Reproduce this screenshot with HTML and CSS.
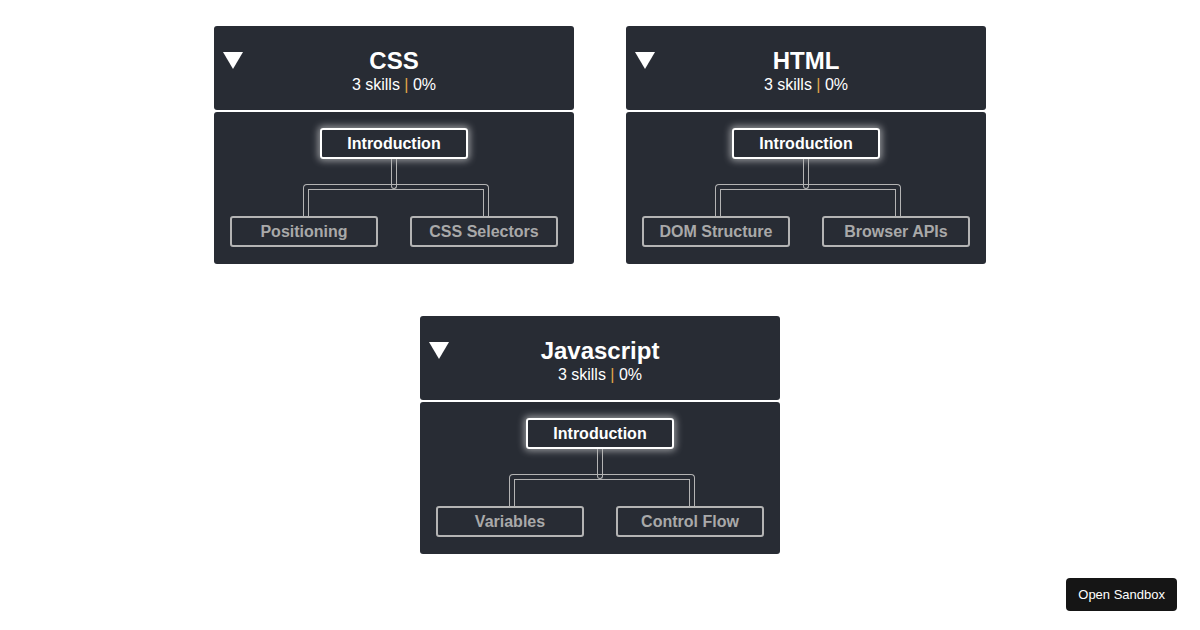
FILE: index.html
```html
<!DOCTYPE html>
<html lang="en">
<head>
  <meta charset="UTF-8">
  <meta name="viewport" content="width=device-width, initial-scale=1.0">
  <title>Skill Trees</title>
  <link rel="stylesheet" href="styles.css">
</head>
<body>
  <div class="trees">

    <div class="tree-card">
      <div class="tree-header">
        <span class="toggle"></span>
        <div class="tree-title">
          <h2>CSS</h2>
          <div class="tree-meta">3 skills <span class="sep">|</span> 0%</div>
        </div>
      </div>
      <div class="tree-body">
        <div class="node root">Introduction</div>
        <div class="stem"></div>
        <div class="branch"><div class="branch-inner"></div></div>
        <div class="children">
          <div class="node">Positioning</div>
          <div class="node">CSS Selectors</div>
        </div>
      </div>
    </div>

    <div class="tree-card">
      <div class="tree-header">
        <span class="toggle"></span>
        <div class="tree-title">
          <h2>HTML</h2>
          <div class="tree-meta">3 skills <span class="sep">|</span> 0%</div>
        </div>
      </div>
      <div class="tree-body">
        <div class="node root">Introduction</div>
        <div class="stem"></div>
        <div class="branch"><div class="branch-inner"></div></div>
        <div class="children">
          <div class="node">DOM Structure</div>
          <div class="node">Browser APIs</div>
        </div>
      </div>
    </div>

    <div class="tree-card">
      <div class="tree-header">
        <span class="toggle"></span>
        <div class="tree-title">
          <h2>Javascript</h2>
          <div class="tree-meta">3 skills <span class="sep">|</span> 0%</div>
        </div>
      </div>
      <div class="tree-body">
        <div class="node root">Introduction</div>
        <div class="stem"></div>
        <div class="branch"><div class="branch-inner"></div></div>
        <div class="children">
          <div class="node">Variables</div>
          <div class="node">Control Flow</div>
        </div>
      </div>
    </div>

  </div>

  <button class="sandbox-btn">Open Sandbox</button>
</body>
</html>
```

FILE: styles.css
```css
body {
  font-family: "Liberation Sans", Arial, sans-serif;
  margin: 0;
  padding: 0;
  background: #fff;
}
.trees {
  display: flex;
  flex-wrap: wrap;
  justify-content: center;
  column-gap: 52px;
  row-gap: 52px;
  width: 772px;
  margin: 26px auto 0;
}
.tree-card {
  width: 360px;
  display: flex;
  flex-direction: column;
  gap: 2px;
}
.tree-header {
  background: #282c34;
  border-radius: 3px;
  height: 84px;
  box-sizing: border-box;
  padding-top: 21px;
  display: grid;
  grid-template-columns: 1fr auto 1fr;
  align-items: start;
  color: #fff;
}
.toggle {
  justify-self: start;
  margin: 5px 0 0 9px;
  width: 0;
  height: 0;
  border-left: 10px solid transparent;
  border-right: 10px solid transparent;
  border-top: 17px solid #fff;
}
.tree-title {
  text-align: center;
}
.tree-title h2 {
  margin: 0;
  font-size: 24px;
  line-height: 28px;
  font-weight: bold;
}
.tree-meta {
  font-size: 16px;
  line-height: 20px;
}
.tree-meta .sep {
  color: #e0a848;
}
.tree-body {
  background: #282c34;
  border-radius: 3px;
  padding: 16px 16px 17px;
  display: flex;
  flex-direction: column;
  align-items: center;
}
.node {
  width: 148px;
  height: 31px;
  box-sizing: border-box;
  border: 2px solid #b4b4b4;
  border-radius: 3px;
  color: #a9a9a9;
  font-size: 16px;
  font-weight: bold;
  display: flex;
  align-items: center;
  justify-content: center;
}
.node.root {
  border-color: #fff;
  color: #fff;
  box-shadow: 0 0 7px 2px rgba(255, 255, 255, 0.5);
}
.stem {
  width: 4px;
  height: 29px;
  border: 1px solid #b4b4b4;
  border-top: none;
  border-radius: 0 0 3px 3px;
  margin-left: -1px;
  position: relative;
  z-index: 1;
}
.branch {
  width: 184px;
  height: 31px;
  margin-top: -5px;
  margin-left: 3px;
  border: 1px solid #b4b4b4;
  border-bottom: none;
  border-radius: 4px 4px 0 0;
  box-sizing: content-box;
  display: flex;
}
.branch-inner {
  flex: 1;
  margin: 4px 4px 0;
  border: 1px solid #b4b4b4;
  border-bottom: none;
}
.children {
  display: flex;
  gap: 32px;
}
.sandbox-btn {
  position: fixed;
  right: 23px;
  bottom: 19px;
  background: #151515;
  color: #fff;
  border: none;
  border-radius: 4px;
  padding: 0 12px;
  height: 33px;
  font-family: "Liberation Sans", Arial, sans-serif;
  font-size: 13px;
  cursor: pointer;
}
```
